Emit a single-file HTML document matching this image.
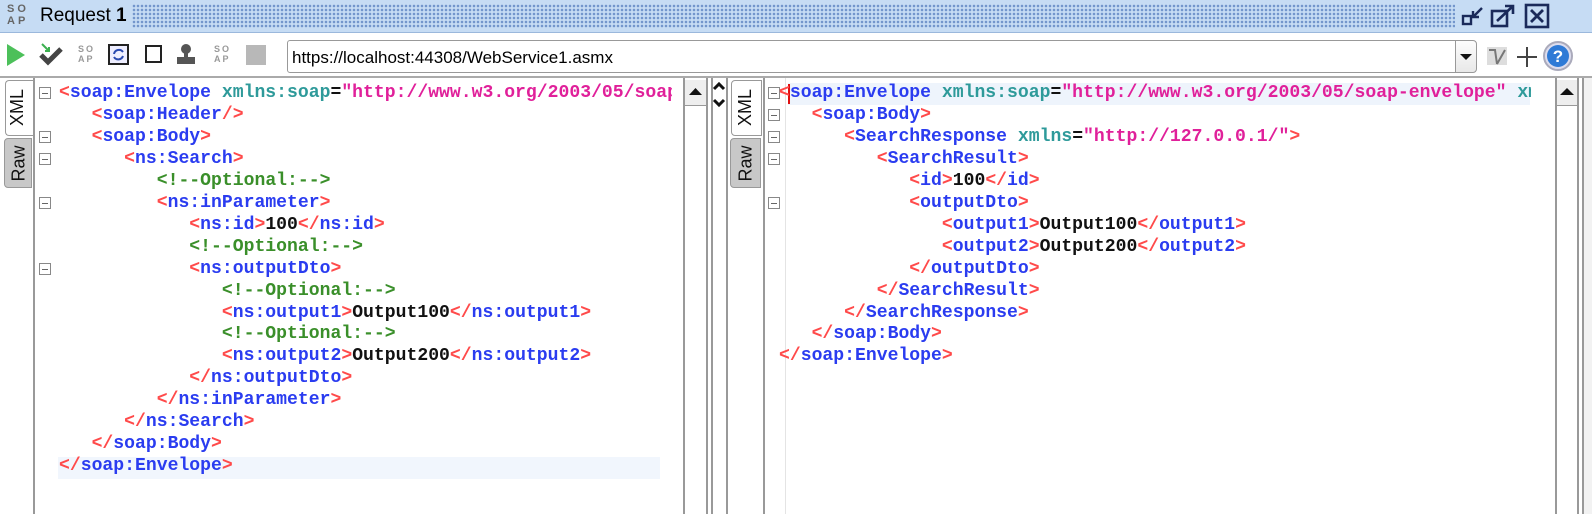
<!DOCTYPE html>
<html><head><meta charset="utf-8"><style>
*{margin:0;padding:0;box-sizing:border-box}
body{width:1592px;height:514px;overflow:hidden;background:#fff;font-family:"Liberation Sans",sans-serif;position:relative}
.abs{position:absolute}
#title{left:0;top:0;width:1592px;height:33px;background:#c6dcf4;border-bottom:1px solid #9bb8dc}
#hatch{left:132px;top:4px;width:1323px;height:24px;background-image:radial-gradient(circle,#7396cc 1.1px,transparent 1.5px);background-size:4px 4px}
.code{font-family:"Liberation Mono",monospace;font-size:18.1px;line-height:21.95px;white-space:pre;font-weight:bold;letter-spacing:0}
.b{color:#ff4a4a}.t{color:#2a3cf0}.a{color:#2e9a9a}.v{color:#e0209a}.c{color:#3a8f2a}.x{color:#111}
.fold{width:12px;height:12px;border:1px solid #888;background:#fff}
.fold:after{content:"";position:absolute;left:2px;top:5px;width:6px;height:1px;background:#666}
.vl{width:2px;background:#999}
.tab{border:1px solid #999;border-radius:4px 0 0 4px}
.tab span{position:absolute;transform:rotate(-90deg);font-size:18px;color:#111;white-space:nowrap}
</style></head><body>
<div class="abs" id="title"></div>
<div class="abs" id="hatch"></div>
<div class="abs" style="left:7px;top:3px;font-size:11px;line-height:12px;color:#666;font-weight:bold;letter-spacing:3px">SO<br>AP</div>
<div class="abs" style="left:40px;top:5px;font-size:19px;color:#000">Request <b>1</b></div>
<div class="abs" style="left:1460px;top:4px;width:26px;height:26px">
<svg width="26" height="26"><rect x="3" y="12" width="8" height="8" fill="none" stroke="#1a2a5a" stroke-width="2.4"/><path d="M22 4 L13 13 M13 7 V13 H19" stroke="#1a2a5a" stroke-width="2.4" fill="none"/></svg></div>
<div class="abs" style="left:1489px;top:3px;width:28px;height:28px">
<svg width="28" height="28"><rect x="3" y="8" width="15" height="15" fill="none" stroke="#1a2a5a" stroke-width="2.6"/><path d="M8 18 L24 3 M16 3 H24 V11" stroke="#1a2a5a" stroke-width="2.6" fill="none"/></svg></div>
<div class="abs" style="left:1524px;top:3px;width:26px;height:26px">
<svg width="26" height="26"><rect x="2" y="2" width="22" height="22" fill="none" stroke="#1a2a5a" stroke-width="2.6"/><path d="M7 7 L19 19 M19 7 L7 19" stroke="#1a2a5a" stroke-width="2.8"/></svg></div>

<svg class="abs" style="left:5px;top:42px" width="22" height="26"><path d="M2 2 L20 13 L2 24Z" fill="#4cc05a"/></svg>
<svg class="abs" style="left:38px;top:42px" width="26" height="26"><path d="M3 13 L10 20 L23 7" stroke="#444" stroke-width="5" fill="none"/><path d="M4 2 L11 9 M7 9 H11 V5" stroke="#3cb050" stroke-width="2" fill="none"/></svg>
<div class="abs" style="left:78px;top:44px;font-size:9px;line-height:10px;color:#999;font-weight:bold;letter-spacing:2px">SO<br>AP</div>
<svg class="abs" style="left:108px;top:44px" width="22" height="22"><rect x="1" y="1" width="19" height="19" fill="#eef" stroke="#222" stroke-width="2"/><path d="M6 10 A5 5 0 0 1 15 8 M15 12 A5 5 0 0 1 6 13" stroke="#2a4ab0" stroke-width="2" fill="none"/></svg>
<div class="abs" style="left:145px;top:45px;width:17px;height:18px;border:2px solid #222"></div>
<svg class="abs" style="left:175px;top:42px" width="22" height="26"><circle cx="11" cy="7" r="5" fill="#555"/><rect x="9" y="10" width="4" height="6" fill="#555"/><rect x="2" y="15" width="18" height="7" fill="#555"/></svg>
<div class="abs" style="left:214px;top:44px;font-size:9px;line-height:10px;color:#999;font-weight:bold;letter-spacing:2px">SO<br>AP</div>
<div class="abs" style="left:246px;top:45px;width:20px;height:20px;background:#b8b8b8"></div>
<div class="abs" style="left:287px;top:40px;width:1170px;height:33px;border:1px solid #999;border-radius:3px 0 0 3px;background:#fff;font-size:17px;padding:7px 0 0 4px;color:#000">https://localhost:44308/WebService1.asmx</div>
<div class="abs" style="left:1455px;top:40px;width:22px;height:33px;border:1px solid #999;border-radius:0 4px 4px 0;background:linear-gradient(#fdfdfd,#e8e8e8)"><svg width="20" height="31"><path d="M4 13 H16 L10 19Z" fill="#111"/></svg></div>
<svg class="abs" style="left:1485px;top:44px" width="24" height="24"><rect x="2" y="3" width="20" height="18" fill="#ddd"/><path d="M4 6 H10 L12 20 M12 20 L20 6" stroke="#777" stroke-width="2" fill="none"/></svg>
<svg class="abs" style="left:1516px;top:46px" width="22" height="22"><path d="M11 1 V21 M1 11 H21" stroke="#444" stroke-width="2"/></svg>
<svg class="abs" style="left:1542px;top:40px" width="32" height="32"><circle cx="16" cy="16" r="14" fill="#dde" stroke="#aab" stroke-width="2"/><circle cx="16" cy="16" r="11" fill="#2f7ad6"/><text x="16" y="22" text-anchor="middle" fill="#fff" font-weight="bold" font-size="17" font-family="Liberation Sans">?</text></svg>

<div class="abs" style="left:0;top:76px;width:1592px;height:2px;background:#aaa"></div>
<div class="abs vl" style="left:33px;top:78px;height:436px"></div>
<div class="abs vl" style="left:683px;top:78px;height:436px"></div>
<div class="abs vl" style="left:706px;top:78px;height:436px"></div>
<div class="abs vl" style="left:711px;top:78px;height:436px"></div>
<div class="abs vl" style="left:726px;top:78px;height:436px"></div>
<div class="abs vl" style="left:763px;top:78px;height:436px"></div>
<div class="abs" style="left:785px;top:78px;width:1px;height:436px;background:#e4e4e4"></div>
<div class="abs vl" style="left:1555px;top:78px;height:436px"></div>
<div class="abs vl" style="left:1577px;top:78px;height:436px"></div>
<div class="abs vl" style="left:1582px;top:78px;height:436px"></div>
<div class="abs" style="left:1584px;top:78px;width:8px;height:436px;background:#f2f2f2"></div>
<div class="abs" style="left:685px;top:80px;width:21px;height:26px;background:#eee;border-bottom:1px solid #999"><svg width="21" height="26"><path d="M4 15 H17 L10.5 8Z" fill="#111"/></svg></div>
<div class="abs" style="left:1557px;top:80px;width:20px;height:26px;background:#eee;border-bottom:1px solid #999"><svg width="20" height="26"><path d="M3 15 H17 L10 8Z" fill="#111"/></svg></div>
<svg class="abs" style="left:712px;top:80px" width="14" height="30"><path d="M2 9 L7 4 L12 9 M2 20 L7 25 L12 20" stroke="#111" stroke-width="3" fill="none"/></svg>

<div class="abs tab" style="left:5px;top:80px;width:28px;height:56px;background:#fff;border-right:none"><span style="left:-7px;top:16px">XML</span></div>
<div class="abs tab" style="left:4px;top:138px;width:28px;height:50px;background:#c8c8c8"><span style="left:-4px;top:14px">Raw</span></div>
<div class="abs tab" style="left:731px;top:80px;width:31px;height:56px;background:#fff"><span style="left:-5px;top:16px">XML</span></div>
<div class="abs tab" style="left:730px;top:138px;width:31px;height:50px;background:#c8c8c8"><span style="left:-3px;top:14px">Raw</span></div>

<div class="abs fold" style="left:39px;top:87px"></div>
<div class="abs fold" style="left:39px;top:131px"></div>
<div class="abs fold" style="left:39px;top:153px"></div>
<div class="abs fold" style="left:39px;top:197px"></div>
<div class="abs fold" style="left:39px;top:263px"></div>
<div class="abs fold" style="left:768px;top:87px"></div>
<div class="abs fold" style="left:768px;top:109px"></div>
<div class="abs fold" style="left:768px;top:131px"></div>
<div class="abs fold" style="left:768px;top:153px"></div>
<div class="abs fold" style="left:768px;top:197px"></div>

<div class="abs" style="left:58px;top:457px;width:602px;height:22px;background:#f1f6fd"></div>
<div class="abs" style="left:788px;top:83px;width:742px;height:22px;background:#eef4fc"></div>
<div class="abs" style="left:788px;top:84px;width:2px;height:20px;background:#e01010"></div>

<div class="abs code" style="left:59px;top:83px;width:613px;overflow:hidden"><span class="b">&lt;</span><span class="t">soap:Envelope</span> <span class="a">xmlns:soap</span><span class="x">=</span><span class="v">"http://www.w3.org/2003/05/soap-envelope"</span>
   <span class="b">&lt;</span><span class="t">soap:Header</span><span class="b">/&gt;</span>
   <span class="b">&lt;</span><span class="t">soap:Body</span><span class="b">&gt;</span>
      <span class="b">&lt;</span><span class="t">ns:Search</span><span class="b">&gt;</span>
         <span class="c">&lt;!--Optional:--&gt;</span>
         <span class="b">&lt;</span><span class="t">ns:inParameter</span><span class="b">&gt;</span>
            <span class="b">&lt;</span><span class="t">ns:id</span><span class="b">&gt;</span><span class="x">100</span><span class="b">&lt;/</span><span class="t">ns:id</span><span class="b">&gt;</span>
            <span class="c">&lt;!--Optional:--&gt;</span>
            <span class="b">&lt;</span><span class="t">ns:outputDto</span><span class="b">&gt;</span>
               <span class="c">&lt;!--Optional:--&gt;</span>
               <span class="b">&lt;</span><span class="t">ns:output1</span><span class="b">&gt;</span><span class="x">Output100</span><span class="b">&lt;/</span><span class="t">ns:output1</span><span class="b">&gt;</span>
               <span class="c">&lt;!--Optional:--&gt;</span>
               <span class="b">&lt;</span><span class="t">ns:output2</span><span class="b">&gt;</span><span class="x">Output200</span><span class="b">&lt;/</span><span class="t">ns:output2</span><span class="b">&gt;</span>
            <span class="b">&lt;/</span><span class="t">ns:outputDto</span><span class="b">&gt;</span>
         <span class="b">&lt;/</span><span class="t">ns:inParameter</span><span class="b">&gt;</span>
      <span class="b">&lt;/</span><span class="t">ns:Search</span><span class="b">&gt;</span>
   <span class="b">&lt;/</span><span class="t">soap:Body</span><span class="b">&gt;</span>
<span class="b">&lt;/</span><span class="t">soap:Envelope</span><span class="b">&gt;</span></div>

<div class="abs code" style="left:779px;top:83px;width:752px;overflow:hidden"><span class="b">&lt;</span><span class="t">soap:Envelope</span> <span class="a">xmlns:soap</span><span class="x">=</span><span class="v">"http://www.w3.org/2003/05/soap-envelope"</span> <span class="a">xmlns:ns</span>
   <span class="b">&lt;</span><span class="t">soap:Body</span><span class="b">&gt;</span>
      <span class="b">&lt;</span><span class="t">SearchResponse</span> <span class="a">xmlns</span><span class="x">=</span><span class="v">"http://127.0.0.1/"</span><span class="b">&gt;</span>
         <span class="b">&lt;</span><span class="t">SearchResult</span><span class="b">&gt;</span>
            <span class="b">&lt;</span><span class="t">id</span><span class="b">&gt;</span><span class="x">100</span><span class="b">&lt;/</span><span class="t">id</span><span class="b">&gt;</span>
            <span class="b">&lt;</span><span class="t">outputDto</span><span class="b">&gt;</span>
               <span class="b">&lt;</span><span class="t">output1</span><span class="b">&gt;</span><span class="x">Output100</span><span class="b">&lt;/</span><span class="t">output1</span><span class="b">&gt;</span>
               <span class="b">&lt;</span><span class="t">output2</span><span class="b">&gt;</span><span class="x">Output200</span><span class="b">&lt;/</span><span class="t">output2</span><span class="b">&gt;</span>
            <span class="b">&lt;/</span><span class="t">outputDto</span><span class="b">&gt;</span>
         <span class="b">&lt;/</span><span class="t">SearchResult</span><span class="b">&gt;</span>
      <span class="b">&lt;/</span><span class="t">SearchResponse</span><span class="b">&gt;</span>
   <span class="b">&lt;/</span><span class="t">soap:Body</span><span class="b">&gt;</span>
<span class="b">&lt;/</span><span class="t">soap:Envelope</span><span class="b">&gt;</span></div>
</body></html>
